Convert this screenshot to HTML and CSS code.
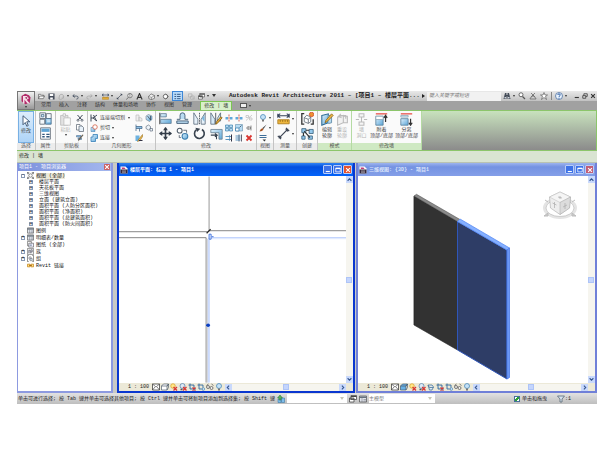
FILE: index.html
```html
<!DOCTYPE html>
<html lang="zh-CN">
<head>
<meta charset="utf-8">
<title>Autodesk Revit Architecture 2011</title>
<link rel="stylesheet" href="styles.css">
</head>
<body>
<svg class="defs" aria-hidden="true">
  <defs>
    <linearGradient id="blueFill" x1="0" y1="0" x2="1" y2="1"><stop offset="0" stop-color="#e2f2fc"/><stop offset="1" stop-color="#5ba6d8"/></linearGradient>
  </defs>
  <symbol id="revit" viewBox="0 0 16 16"><path d="M2 4l5-3 5 2 2 3-1 7-6 2-5-4z" fill="#b22a68"/><path d="M4 4h5l3 3-3 2 4 5h-3L6 9v5H4z" fill="#f7dce8"/><path d="M7 5.500h2l1 1-2 1.500z" fill="#8a1547"/></symbol>
  <symbol id="doc" viewBox="0 0 16 16"><path d="M1 1h10l4 4v10H1z" fill="#fff"/><path d="M1 7h14v8H1z" fill="#33263a"/><path d="M3 3h6l2 3H4z" fill="#c23b77"/><path d="M4 10h8M4 12.500h8" stroke="#fff"/></symbol>
  <symbol id="open" viewBox="0 0 16 16"><path d="M1 13V3h5l2 2h5v3M1 13l3-6h11l-3 6z" fill="#f4f4f4" stroke="#555" stroke-width="1.500"/></symbol>
  <symbol id="save" viewBox="0 0 16 16"><path d="M1 1h14v14H3l-2-2z" fill="#444b59"/><path d="M4 2h8v5H4zM5 10h6v5H5z" fill="#fff"/></symbol>
  <symbol id="sync" viewBox="0 0 16 16"><path d="M3 9a5 5 0 1 1 9 2M8 15a4 4 0 0 1-5-6M12 7v5H8" fill="none" stroke="#aaa" stroke-width="2"/></symbol>
  <symbol id="undo" viewBox="0 0 16 16"><path d="M5 3L2 7l5 3M2 7h8a4 3.500 0 0 1 0 7" fill="none" stroke="#4c5666" stroke-width="2"/></symbol>
  <symbol id="redo" viewBox="0 0 16 16"><path d="M11 3l3 4-5 3M14 7H6a4 3.500 0 0 0 0 7" fill="none" stroke="#aaa" stroke-width="2"/></symbol>
  <symbol id="ruler" viewBox="0 0 16 16"><path d="M1 2v5M15 2v5M1 4.500h14M4 2L1 4.500 4 7M12 2l3 2.500L12 7" fill="none" stroke="#34425a" stroke-width="1.300"/><path d="M1 9.500h14v5H1z" fill="#eeb73f" stroke="#a97615"/><path d="M4 10v2M7 10v2M10 10v2M13 10v2" stroke="#87600f"/></symbol>
  <symbol id="dim" viewBox="0 0 16 16"><path d="M3 13L13 3M1 11l4 4M11 1l4 4" fill="none" stroke="#3c4554" stroke-width="1.500"/><path d="M2 14l1-4 3 3zM14 2l-4 1 3 3z" fill="#3c4554"/></symbol>
  <symbol id="tag" viewBox="0 0 16 16"><circle cx="9" cy="6" r="5" fill="#fff" stroke="#444" stroke-width="1.500"/><path d="M8 4l1-1v6M5 10l-4 5" fill="none" stroke="#444" stroke-width="1.500"/></symbol>
  <symbol id="text" viewBox="0 0 16 16"><path d="M2 15L8 1l6 14M4.500 10h7" fill="none" stroke="#333" stroke-width="2.400"/></symbol>
  <symbol id="house" viewBox="0 0 16 16"><path d="M1 8l6-6 8 4v6l-7 3-6-2z" fill="#eee" stroke="#444" stroke-width="1.300"/><path d="M1 8l7 2 7-4M8 10v5" fill="none" stroke="#444"/></symbol>
  <symbol id="section" viewBox="0 0 16 16"><path d="M8 1l7 7-7 7V1z" fill="#333"/><circle cx="8" cy="8" r="5" fill="#fff" stroke="#333" stroke-width="1.500"/></symbol>
  <symbol id="thin" viewBox="0 0 16 16"><path d="M1 3h4M7 3h8M1 8h4M7 8h8M1 13h4M7 13h8" stroke="#294b77" stroke-width="2"/></symbol>
  <symbol id="windows" viewBox="0 0 16 16"><path d="M4 1h11v8H4zM1 6h9v8H1z" fill="#fff" stroke="#444" stroke-width="1.500"/><path d="M4 3h11M1 8h9" stroke="#444" stroke-width="2"/></symbol>
  <symbol id="hidden" viewBox="0 0 16 16"><path d="M1 2h8v7H1zM6 7h8v7H6z" fill="#ddd" stroke="#aaa" stroke-width="1.500"/><path d="M9 9l5 5m0-5l-5 5" stroke="#aaa"/></symbol>
  <symbol id="bino" viewBox="0 0 16 16"><path d="M4 2h3v4h2V2h3l3 12H9V9H7v5H1z" fill="#444c58"/><path d="M3 10h3v3H3zM10 10h3v3h-3z" fill="#cfd6df"/></symbol>
  <symbol id="key" viewBox="0 0 16 16"><circle cx="6" cy="5.500" r="4" fill="#fff" stroke="#555" stroke-width="1.700"/><path d="M9 9l5 5" stroke="#555" stroke-width="2.500"/></symbol>
  <symbol id="comm" viewBox="0 0 16 16"><path d="M2 14c0-5 6-3 6-8M14 14c0-5-6-3-6-8M4 2l8 8M12 2l-8 8M2 14h12" fill="none" stroke="#666" stroke-width="1.500"/></symbol>
  <symbol id="star" viewBox="0 0 16 16"><path d="M8 1l2 5h5l-4 3 2 6-5-4-5 4 2-6-4-3h5z" fill="#fff" stroke="#555" stroke-width="1.300"/></symbol>
  <symbol id="help" viewBox="0 0 16 16"><circle cx="8" cy="8" r="7" fill="#e9f3fd" stroke="#456a9c" stroke-width="1.500"/><path d="M5.500 6c0-3 5-3 5 0 0 2-2.500 1.500-2.500 4M8 11.500v2" fill="none" stroke="#2b5ca5" stroke-width="2"/></symbol>
  <symbol id="min" viewBox="0 0 16 16"><path d="M2 12h11" stroke="currentColor" stroke-width="3"/></symbol>
  <symbol id="max" viewBox="0 0 16 16"><path d="M2 3h12v10H2z" fill="none" stroke="currentColor" stroke-width="2"/><path d="M2 4h12" stroke="currentColor" stroke-width="3"/></symbol>
  <symbol id="restore" viewBox="0 0 16 16"><path d="M5 7V2h9v7h-4M2 7h8v7H2z" fill="none" stroke="currentColor" stroke-width="2"/></symbol>
  <symbol id="close" viewBox="0 0 16 16"><path d="M3 3l10 10M13 3L3 13" stroke="currentColor" stroke-width="3"/></symbol>
  <symbol id="cursor" viewBox="0 0 16 16"><path d="M4 1v12l3-3 2 5 2-1-2-5h4z" fill="#fff" stroke="#38516f" stroke-width="1.200"/></symbol>
  <symbol id="typeprops" viewBox="0 0 16 16"><path d="M1 1h7v7H1zM9 2h6v6H9zM1 9h6v6H1z" fill="#f4f8fb" stroke="#5d6874"/><path d="M3 3h3v3H3zM8 8h7v7H8z" fill="url(#blueFill)" stroke="#50708c"/><path d="M10 10h4M10 12h4" stroke="#fff"/></symbol>
  <symbol id="props" viewBox="0 0 16 16"><path d="M2 1h12v14H2z" fill="#fff" stroke="#5d6874"/><path d="M3 2h10v4H3z" fill="#5fa5d5"/><path d="M4 9h3M9 9h4M4 12h3M9 12h4" stroke="#34587c" stroke-width="1.600"/></symbol>
  <symbol id="paste" viewBox="0 0 16 16"><path d="M2 3h9v12H2z" fill="#e3e3e3" stroke="#bbb"/><path d="M5 1h3v3H5zM6 6h8v9H6z" fill="#f9f9f9" stroke="#bbb"/></symbol>
  <symbol id="cut" viewBox="0 0 16 16"><path d="M3 2l8 9M13 2L5 11" stroke="#3f4a58" stroke-width="2"/><circle cx="4" cy="12.500" r="2" fill="none" stroke="#3f4a58" stroke-width="1.500"/><circle cx="12" cy="12.500" r="2" fill="none" stroke="#3f4a58" stroke-width="1.500"/></symbol>
  <symbol id="copy" viewBox="0 0 16 16"><path d="M1 1h7l2 2v9H1z" fill="#fff" stroke="#56616e" stroke-width="1.400"/><path d="M6 4h6l3 3v8H6z" fill="#e8f2fa" stroke="#56616e" stroke-width="1.400"/></symbol>
  <symbol id="match" viewBox="0 0 16 16"><path d="M1 3h9v3H1zM4 8h7v3H4z" fill="#8fc0e5" stroke="#3c5f82"/><path d="M15 2L8 11l-4 4 1-5 8-9z" fill="#6a6255"/></symbol>
  <symbol id="cope" viewBox="0 0 16 16"><path d="M2 1v14M2 8h4M14 2L6 8l8 6M7 2l6 12" fill="none" stroke="#3f4a58" stroke-width="2"/></symbol>
  <symbol id="cutgeo" viewBox="0 0 16 16"><path d="M2 7h8v8H2z" fill="url(#blueFill)" stroke="#3d79ac"/><circle cx="10" cy="6" r="4.500" fill="#fff" stroke="#d0573e" stroke-width="1.500"/></symbol>
  <symbol id="join" viewBox="0 0 16 16"><path d="M6 1h9v8h-4v6H2V6h4z" fill="url(#blueFill)" stroke="#2e79b4" stroke-width="1.500"/></symbol>
  <symbol id="ghost" viewBox="0 0 16 16"><path d="M2 2h6v12H2zM8 6l6 3v5H8z" fill="#eee" stroke="#bbb" stroke-width="1.400"/></symbol>
  <symbol id="split" viewBox="0 0 16 16"><path d="M2 4l5-3 7 3v7l-5 4-7-4z" fill="url(#blueFill)" stroke="#5b6b7a"/><path d="M5 4l6 8M11 4v8" stroke="#3a4450" stroke-width="1.500"/></symbol>
  <symbol id="beam" viewBox="0 0 16 16"><path d="M2 1v13M2 5h12v4H2M9 9v6" fill="#8fc0e5" stroke="#41678a" stroke-width="1.500"/></symbol>
  <symbol id="demolish" viewBox="0 0 16 16"><path d="M2 5l5-3 4 3v4l-4 3-5-3zM10 9h5v5h-5z" fill="#eef4f9" stroke="#5a6878" stroke-width="1.300"/></symbol>
  <symbol id="paint" viewBox="0 0 16 16"><path d="M1 3h8v11H1z" fill="#6db3e2"/><path d="M15 1L7 11l-2 4 5-2 6-9z" fill="#e8b64e" stroke="#86611a"/><path d="M8 13h7" stroke="#334" stroke-width="2"/></symbol>
  <symbol id="align" viewBox="0 0 16 16"><path d="M1 1v14" stroke="#444" stroke-width="1.300"/><path d="M2 2h7v4H2zM2 9h13v5H2z" fill="url(#blueFill)" stroke="#627d93"/></symbol>
  <symbol id="offset" viewBox="0 0 16 16"><path d="M1 9h4V4a3 3 0 0 1 6 0v5h4M1 14h14v-3H1z" fill="#b9dbf2" stroke="#4b657d" stroke-width="1.200"/></symbol>
  <symbol id="mirror" viewBox="0 0 16 16"><path d="M1 1v14h5V9zM15 1v14h-5V9z" fill="#e7f1f9" stroke="#5b6d7e"/><path d="M8 1v14" stroke="#3a4450" stroke-dasharray="2 1"/><path d="M11 8l3-4v8z" fill="#79b6e0"/></symbol>
  <symbol id="mirror2" viewBox="0 0 16 16"><path d="M1 1v14h5V9zM13 1v10h-4V8z" fill="#d6eaf8" stroke="#5b6d7e"/><path d="M7 1v14" stroke="#3a4450"/><path d="M15 7l-6 7-2 1 1-3 5-6z" fill="#edae38" stroke="#80601a"/></symbol>
  <symbol id="move" viewBox="0 0 16 16"><path d="M8 1v14M1 8h14" stroke="#333d49" stroke-width="2"/><path d="M8 0l3 4H5zM8 16l3-4H5zM0 8l4-3v6zM16 8l-4-3v6z" fill="#333d49"/></symbol>
  <symbol id="copy2" viewBox="0 0 16 16"><circle cx="4.500" cy="4.500" r="3" fill="#fff" stroke="#4c5866" stroke-width="1.300"/><path d="M9 4h4v3M4 10v3h2" fill="none" stroke="#4c5866"/><circle cx="11" cy="11.500" r="3.500" fill="url(#blueFill)" stroke="#3e7fae" stroke-width="1.300"/></symbol>
  <symbol id="rotate" viewBox="0 0 16 16"><path d="M4 3.500a6 6 0 1 0 7-.5" fill="none" stroke="#3a4450" stroke-width="2"/><path d="M3 1l6 1-4 4z" fill="#3a4450"/></symbol>
  <symbol id="trim" viewBox="0 0 16 16"><path d="M1 3h14v12h-4V7H1z" fill="url(#blueFill)" stroke="#6a8193"/><path d="M1 10h7v5M6 8l3 2-3 2" fill="none" stroke="#3a4450" stroke-width="1.300"/></symbol>
  <symbol id="splitel" viewBox="0 0 16 16"><path d="M1 6h5v5H1zM10 6h5v5h-5z" fill="#5ea8da"/><path d="M8 1v4M8 11v4M6 8h4" stroke="#cc503f" stroke-width="1.700"/></symbol>
  <symbol id="array" viewBox="0 0 16 16"><path d="M1 2h6v5H1zM9 2h6v5H9zM1 9h6v5H1zM9 9h6v5H9z" fill="#b7dcf4" stroke="#367bac" stroke-width="1.300"/></symbol>
  <symbol id="scale" viewBox="0 0 16 16"><path d="M1 1h14v13H1z" fill="#b7dcf4" stroke="#517e9f"/><path d="M1 8h7v6H1z" fill="#fff" stroke="#367bac" stroke-width="1.500"/><path d="M9 7l4-4" stroke="#345" stroke-width="1.500"/></symbol>
  <symbol id="extend" viewBox="0 0 16 16"><path d="M13 1v14" stroke="#334" stroke-width="2"/><path d="M1 5h10M1 11h10M8 3l3 2-3 2M8 9l3 2-3 2" fill="none" stroke="#3e82b5" stroke-width="1.700"/></symbol>
  <symbol id="extends" viewBox="0 0 16 16"><path d="M13 1v14M8 1v14" stroke="#334" stroke-width="1.500"/><path d="M1 4h10M1 8h10M1 12h10" stroke="#3e82b5" stroke-width="1.700"/></symbol>
  <symbol id="unpin" viewBox="0 0 16 16"><path d="M2 3h5v4H2zM9 8h5v4H9zM7 5l4 3M2 13L14 2" fill="none" stroke="#bbb" stroke-width="1.400"/></symbol>
  <symbol id="pin" viewBox="0 0 16 16"><path d="M2 8h4M6 4v8M6 6h5v4H6M12 3v10" fill="none" stroke="#777" stroke-width="1.600"/></symbol>
  <symbol id="delete" viewBox="0 0 16 16"><path d="M3 3l10 10M13 3L3 13" stroke="#d93631" stroke-width="3.600"/></symbol>
  <symbol id="bulb" viewBox="0 0 16 16"><circle cx="8" cy="6" r="5" fill="#c5e2f7" stroke="#4685b7" stroke-width="1.500"/><path d="M6 11h4v4H6z" fill="#777"/></symbol>
  <symbol id="brush" viewBox="0 0 16 16"><path d="M15 1L7 8l2 2z" fill="#444"/><path d="M7 8l2 3-3 3-5 1 2-4z" fill="#a75322"/></symbol>
  <symbol id="linework" viewBox="0 0 16 16"><path d="M1 3h14M1 7h14" stroke="#3e6e99" stroke-width="2.200"/><path d="M7 11h7l-3 4z" fill="#333"/></symbol>
  <symbol id="create" viewBox="0 0 16 16"><path d="M4 2H1v13h3M12 15h3V9" fill="none" stroke="#333" stroke-width="1.600"/><path d="M4 7l3-3 5 2v6l-3 2-5-2z" fill="#fff" stroke="#5d6974"/><path d="M4 7l5 2 3-3M9 9v5" fill="none" stroke="#5d6974"/><circle cx="13" cy="3" r="2.700" fill="#ee9231" stroke="#d34e2b"/></symbol>
  <symbol id="group" viewBox="0 0 16 16"><path d="M1 2h5v5H1zM10 3h5v5h-5zM9 11h5v4H9zM1 11h4v4H1z" fill="#94c9ed" stroke="#39617e"/><path d="M4 5l7 8M6 4h4M3 7v4" stroke="#333" stroke-width="1.400"/></symbol>
  <symbol id="editp" viewBox="0 0 16 16"><path d="M1 3l8-2v11l-8 3z" fill="url(#blueFill)" stroke="#2b6993" stroke-width="1.300"/><path d="M9 3h4v9l-4 1" fill="#b8dbf0" stroke="#5784a1"/><path d="M15 3l-8 8-2 1 1-3 7-8z" fill="#edb647" stroke="#8c671c"/></symbol>
  <symbol id="resetp" viewBox="0 0 16 16"><path d="M2 5l7-2v9l-7 3zM9 4h5v8H9M6 1L3 4l4 2M4 3h8v4" fill="#f2f2f2" stroke="#bbb" stroke-width="1.300"/></symbol>
  <symbol id="opening" viewBox="0 0 16 16"><path d="M5 1h6v4H5zM5 11h6v4H5zM1 8h4M11 8h4M8 5v6" fill="#f5f5f5" stroke="#bbb" stroke-width="1.300"/></symbol>
  <symbol id="attach" viewBox="0 0 16 16"><path d="M1 1h14" stroke="#ec756c" stroke-width="2"/><path d="M1 4h9v11H1z" fill="url(#blueFill)" stroke="#567f9b"/><path d="M1 4h9v4H1z" fill="#fff" stroke="#8fa8b9"/><path d="M13 11V4M11 6l2-3 2 3" fill="none" stroke="#333" stroke-width="1.500"/></symbol>
  <symbol id="detach" viewBox="0 0 16 16"><path d="M1 1h14" stroke="#ec756c" stroke-width="2"/><path d="M1 7h9v8H1z" fill="url(#blueFill)" stroke="#567f9b"/><path d="M1 3h9v2H1z" fill="#d3e9f7" stroke="#8fa8b9"/><path d="M13 7v7M11 12l2 3 2-3" fill="none" stroke="#333" stroke-width="1.500"/></symbol>
  <symbol id="views" viewBox="0 0 16 16"><path d="M1 5V1h4M11 1h4v4M15 11v4h-4M5 15H1v-4M1 1l4 4M15 1l-4 4M1 15l4-4M15 15l-4-4" fill="none" stroke="#444" stroke-width="1.300"/><circle cx="8" cy="8" r="4" fill="#fff" stroke="#444" stroke-width="1.300"/></symbol>
  <symbol id="legend" viewBox="0 0 16 16"><path d="M1 2h14v12H1z" fill="#dfe4ea" stroke="#555" stroke-width="1.500"/><path d="M1 3h14v3H1z" fill="#66717c"/><path d="M6 6v8M9 9h5M9 12h5" stroke="#667"/></symbol>
  <symbol id="sheets" viewBox="0 0 16 16"><path d="M1 1h9v10H1z" fill="#fff" stroke="#555" stroke-width="1.400"/><path d="M4 5h11v9H4z" fill="#eef" stroke="#555" stroke-width="1.400"/><path d="M6 8h5v3H6z" fill="#89a"/></symbol>
  <symbol id="family" viewBox="0 0 16 16"><path d="M1 1h14v14H1z" fill="#f4f4f4" stroke="#555" stroke-width="1.300"/><path d="M4 12V5h3v7M9 12V4h3v5H9" fill="none" stroke="#445" stroke-width="1.300"/></symbol>
  <symbol id="groups" viewBox="0 0 16 16"><path d="M4 1H1v14h3M12 1h3v14h-3" fill="none" stroke="#444" stroke-width="1.400"/><circle cx="7" cy="7" r="3" fill="#dde" stroke="#555"/><path d="M7 8h5v5H7z" fill="#cde" stroke="#555"/></symbol>
  <symbol id="link" viewBox="0 0 16 16"><path d="M1 5h6v6H1zM9 5h6v6H9z" fill="#ffe386" stroke="#c7861b" stroke-width="1.800"/><path d="M5 8h6" stroke="#a3640b" stroke-width="2"/></symbol>
  <symbol id="detail" viewBox="0 0 16 16"><path d="M1 2h14v12H1z" fill="#fff" stroke="#444" stroke-width="1.600"/><path d="M1 2l7 6 7-6M1 14l5-6M15 14l-5-6" fill="none" stroke="#444" stroke-width="1.300"/></symbol>
  <symbol id="style" viewBox="0 0 16 16"><path d="M1 6l4-4h10l-3 4v8H1z" fill="currentColor" stroke="#456" stroke-width="1.300"/><path d="M1 6h11l3-4v7l-3 5" fill="none" stroke="#456" stroke-width="1.300"/></symbol>
  <symbol id="sun" viewBox="0 0 16 16"><circle cx="6" cy="6" r="4.500" fill="#ffe98b" stroke="#dda02b" stroke-width="1.500"/><path d="M7 8l7 7M14 8l-7 7" stroke="#d93631" stroke-width="2.500"/></symbol>
  <symbol id="shadow" viewBox="0 0 16 16"><circle cx="7" cy="6" r="5" fill="#dceaf6" stroke="#5982ad" stroke-width="1.500"/><path d="M3 13h4" stroke="#555" stroke-width="3"/><path d="M8 8l7 7M15 8l-7 7" stroke="#d93631" stroke-width="2.500"/></symbol>
  <symbol id="render" viewBox="0 0 16 16"><path d="M2 4h8l3 4-3 6H5zM2 4l3 5h8" fill="#dceaf6" stroke="#47739b" stroke-width="1.600"/></symbol>
  <symbol id="crop" viewBox="0 0 16 16"><path d="M4 1v11h12M1 4h11v11" fill="#a7cbe8" stroke="#3f6e98" stroke-width="1.800"/><path d="M9 9l6 6M15 9l-6 6" stroke="#d93631" stroke-width="2.500"/></symbol>
  <symbol id="cropshow" viewBox="0 0 16 16"><path d="M4 1v11h12M1 4h11v11" fill="#bcdaf0" stroke="#3f6e98" stroke-width="1.800"/><circle cx="13" cy="12" r="2.500" fill="#cde7f8" stroke="#4782b1"/></symbol>
  <symbol id="glasses" viewBox="0 0 16 16"><path d="M1 5l4-3M15 5l-4-3" stroke="#555" stroke-width="1.500"/><circle cx="4" cy="8" r="3" fill="#eee" stroke="#555" stroke-width="1.500"/><circle cx="11" cy="10" r="3" fill="#eee" stroke="#555" stroke-width="1.500"/></symbol>
  <symbol id="workset" viewBox="0 0 16 16"><path d="M2 8h6v7H2zM9 6h6v9H9z" fill="#7fbdea" stroke="#2f6e9c"/><path d="M6 0l5 6H8v4H4V6H1z" fill="#58b35b" stroke="#2f703a"/></symbol>
  <symbol id="filter" viewBox="0 0 16 16"><path d="M1 2h14l-5 6v6H6V8z" fill="#d7e4f0" stroke="#50606f" stroke-width="1.500"/></symbol>
  <symbol id="up" viewBox="0 0 8 8"><path d="M1 6l3-3 3 3" fill="none" stroke="#34568f" stroke-width="1.700"/></symbol>
  <symbol id="down" viewBox="0 0 8 8"><path d="M1 2l3 3 3-3" fill="none" stroke="#34568f" stroke-width="1.700"/></symbol>
  <symbol id="left" viewBox="0 0 8 8"><path d="M5 1L2 4l3 3" fill="none" stroke="#34568f" stroke-width="1.700"/></symbol>
  <symbol id="right" viewBox="0 0 8 8"><path d="M3 1l3 3-3 3" fill="none" stroke="#34568f" stroke-width="1.700"/></symbol>
</svg>

<div class="app">
  <header class="top">
    <button class="appbtn" aria-label="应用程序菜单"><svg class="i12"><use href="#revit"/></svg><i class="arr"></i></button>
    <div class="topmain">
      <div class="titlebar">
        <div class="qat">
          <button aria-label="打开"><svg><use href="#open"/></svg></button>
          <button aria-label="保存"><svg><use href="#save"/></svg></button>
          <button aria-label="同步"><svg><use href="#sync"/></svg><i class="arr"></i></button>
          <button aria-label="放弃"><svg><use href="#undo"/></svg><i class="arr"></i></button>
          <button aria-label="重做"><svg><use href="#redo"/></svg><i class="arr"></i></button>
          <button class="lead" aria-label="测量"><svg><use href="#ruler"/></svg><i class="arr"></i></button>
          <button aria-label="尺寸标注"><svg><use href="#dim"/></svg></button>
          <button aria-label="标记"><svg><use href="#tag"/></svg></button>
          <button aria-label="文字"><svg><use href="#text"/></svg></button>
          <button class="lead" aria-label="三维视图"><svg><use href="#house"/></svg><i class="arr"></i></button>
          <button aria-label="剖面"><svg><use href="#section"/></svg></button>
          <button class="on" aria-label="细线"><svg><use href="#thin"/></svg></button>
          <button class="lead" aria-label="关闭隐藏窗口"><svg><use href="#hidden"/></svg></button>
          <button aria-label="切换窗口"><svg><use href="#windows"/></svg><i class="arr"></i></button>
          <button aria-label="自定义"><i class="arr big"></i></button>
        </div>
        <h1>Autodesk Revit Architecture 2011 – [项目1 – 楼层平面...</h1>
        <i class="play"></i>
        <input class="search" type="text" placeholder="键入关键字或短语" aria-label="搜索">
        <div class="info">
          <button aria-label="搜索"><svg><use href="#bino"/></svg><i class="arr"></i></button>
          <button aria-label="速博中心"><svg><use href="#key"/></svg></button>
          <button aria-label="通讯中心"><svg><use href="#comm"/></svg></button>
          <button aria-label="收藏夹"><svg><use href="#star"/></svg></button>
          <i class="bar"></i>
          <button aria-label="帮助"><svg><use href="#help"/></svg><i class="arr"></i></button>
        </div>
        <div class="sys">
          <button aria-label="最小化"><svg><use href="#min"/></svg></button>
          <button aria-label="还原"><svg><use href="#restore"/></svg></button>
          <button aria-label="关闭"><svg><use href="#close"/></svg></button>
        </div>
      </div>
      <nav class="tabs">
        <a href="#">常用</a><a href="#">插入</a><a href="#">注释</a><a href="#">结构</a><a href="#">体量和场地</a><a href="#">协作</a><a href="#">视图</a><a href="#">管理</a><a href="#" class="active">修改 | 墙</a>
        <button class="ribbontoggle" aria-label="功能区显示"><span></span><i class="arr"></i></button>
      </nav>
    </div>
  </header>

  <section class="ribbon">
    <div class="panel p-select"><div class="tools"><button class="big on"><svg class="i12"><use href="#cursor"/></svg><span>修改</span></button></div><h2>选择</h2></div>
    <div class="panel p-props"><div class="tools"><div class="stack2"><button aria-label="类型属性"><svg class="i14"><use href="#typeprops"/></svg></button><button aria-label="属性"><svg class="i14"><use href="#props"/></svg></button></div></div><h2>属性</h2></div>
    <div class="panel p-clip"><div class="tools"><button class="big off"><svg class="i14"><use href="#paste"/></svg><span>粘贴</span><i class="arr"></i></button>
      <div class="stack3"><button aria-label="剪切"><svg><use href="#cut"/></svg></button><button aria-label="复制"><svg><use href="#copy"/></svg></button><button aria-label="匹配类型"><svg><use href="#match"/></svg></button></div></div><h2>剪贴板</h2></div>
    <div class="panel p-geo"><div class="tools">
      <div class="stack3 grow"><button><svg><use href="#cope"/></svg>连接端切割<i class="arr"></i></button><button><svg><use href="#cutgeo"/></svg>剪切 <i class="arr"></i></button><button><svg><use href="#join"/></svg>连接 <i class="arr"></i></button></div>
      <div class="stack3"><button aria-label="墙连接"><svg><use href="#ghost"/></svg></button><button aria-label="梁连接"><svg><use href="#beam"/></svg></button><button aria-label="填色"><svg><use href="#paint"/></svg></button></div>
      <div class="stack3"><button aria-label="拆分面"><svg><use href="#split"/></svg></button><button aria-label="拆除"><svg><use href="#demolish"/></svg></button></div>
    </div><h2>几何图形</h2></div>
    <div class="panel p-modify"><div class="tools">
      <div class="grid4">
        <button aria-label="对齐"><svg class="i14"><use href="#align"/></svg></button><button aria-label="偏移"><svg class="i14"><use href="#offset"/></svg></button><button aria-label="镜像拾取轴"><svg class="i14"><use href="#mirror"/></svg></button><button aria-label="镜像绘制轴"><svg class="i14"><use href="#mirror2"/></svg></button>
        <button aria-label="移动"><svg class="i14"><use href="#move"/></svg></button><button aria-label="复制图元"><svg class="i14"><use href="#copy2"/></svg></button><button aria-label="旋转"><svg class="i14"><use href="#rotate"/></svg></button><button aria-label="修剪"><svg class="i14"><use href="#trim"/></svg></button>
      </div>
      <div class="grid3">
        <button aria-label="拆分"><svg><use href="#splitel"/></svg></button><button aria-label="间隙拆分"><svg><use href="#splitel"/></svg></button><button aria-label="解锁"><svg><use href="#unpin"/></svg></button>
        <button aria-label="阵列"><svg><use href="#array"/></svg></button><button aria-label="缩放"><svg><use href="#scale"/></svg></button><button aria-label="锁定"><svg><use href="#pin"/></svg></button>
        <button aria-label="延伸单个"><svg><use href="#extend"/></svg></button><button aria-label="延伸多个"><svg><use href="#extends"/></svg></button><button aria-label="删除"><svg><use href="#delete"/></svg></button>
      </div>
    </div><h2>修改</h2></div>
    <div class="panel p-view"><div class="tools"><div class="stack3"><button aria-label="隐藏"><svg><use href="#bulb"/></svg><i class="arr"></i></button><button aria-label="替换"><svg><use href="#brush"/></svg><i class="arr"></i></button><button aria-label="线处理"><svg><use href="#linework"/></svg></button></div></div><h2>视图</h2></div>
    <div class="panel p-measure"><div class="tools"><div class="stack2"><button aria-label="测量两点"><svg class="i14"><use href="#ruler"/></svg><i class="arr"></i></button><button aria-label="对齐标注"><svg class="i14"><use href="#dim"/></svg><i class="arr"></i></button></div></div><h2>测量</h2></div>
    <div class="panel p-create"><div class="tools"><div class="stack2"><button aria-label="创建部件"><svg class="i14"><use href="#create"/></svg></button><button aria-label="创建组"><svg class="i14"><use href="#group"/></svg></button></div></div><h2>创建</h2></div>
    <div class="panel ctx p-mode"><div class="tools"><button class="big"><svg class="i14"><use href="#editp"/></svg><span>编辑<br>轮廓</span></button><button class="big off"><svg class="i14"><use href="#resetp"/></svg><span>重设<br>轮廓</span></button></div><h2>模式</h2></div>
    <div class="panel ctx p-wall"><div class="tools"><button class="big off"><svg class="i14"><use href="#opening"/></svg><span>墙<br>洞口</span></button><button class="big"><svg class="i14"><use href="#attach"/></svg><span>附着<br>顶部/底部</span></button><button class="big"><svg class="i14"><use href="#detach"/></svg><span>分离<br>顶部/底部</span></button></div><h2>修改墙</h2></div>
  </section>

  <div class="options">修改 | 墙</div>

  <main class="work">
    <aside class="browser">
      <header><h2>项目1 - 项目浏览器</h2><button class="xp red" aria-label="关闭浏览器"><svg><use href="#close"/></svg></button></header>
      <ul class="tree">
        <li><div class="node root"><button aria-label="折叠">-</button><svg><use href="#views"/></svg><span class="sel">视图 (全部)</span></div>
          <ul>
            <li class="node"><button aria-label="展开">+</button><span>楼层平面</span></li>
            <li class="node"><button aria-label="展开">+</button><span>天花板平面</span></li>
            <li class="node"><button aria-label="展开">+</button><span>三维视图</span></li>
            <li class="node"><button aria-label="展开">+</button><span>立面 (建筑立面)</span></li>
            <li class="node"><button aria-label="展开">+</button><span>面积平面 (人防分区面积)</span></li>
            <li class="node"><button aria-label="展开">+</button><span>面积平面 (净面积)</span></li>
            <li class="node"><button aria-label="展开">+</button><span>面积平面 (总建筑面积)</span></li>
            <li class="node"><button aria-label="展开">+</button><span>面积平面 (防火间面积)</span></li>
          </ul>
        </li>
        <li class="node root leaf"><svg><use href="#legend"/></svg><span>图例</span></li>
        <li class="node root"><button aria-label="展开">+</button><svg><use href="#legend"/></svg><span>明细表/数量</span></li>
        <li class="node root leaf"><svg><use href="#sheets"/></svg><span>图纸 (全部)</span></li>
        <li class="node root"><button aria-label="展开">+</button><svg><use href="#family"/></svg><span>族</span></li>
        <li class="node root"><button aria-label="展开">+</button><svg><use href="#groups"/></svg><span>组</span></li>
        <li class="node root leaf"><svg><use href="#link"/></svg><span>Revit 链接</span></li>
      </ul>
    </aside>

    <section class="win focus">
      <header><svg><use href="#doc"/></svg><h2>楼层平面: 标高 1 - 项目1</h2><button class="xp" aria-label="最小化"><svg><use href="#min"/></svg></button><button class="xp" aria-label="最大化"><svg><use href="#max"/></svg></button><button class="xp red" aria-label="关闭"><svg><use href="#close"/></svg></button></header>
      <div class="view">
        <svg class="canvas" viewBox="0 0 228 207" role="img" aria-label="标高 1 平面">
          <path d="M90.500 0v54" stroke="#b5b5b5" stroke-width="1.400"/>
          <path d="M0 55.500h89M90 54.500h138M0 61.500h87.500V207" fill="none" stroke="#858585"/>
          <path d="M88.500 63h2v144h-2z" fill="#dbe6ff"/>
          <path d="M88.500 62.500V207" stroke="#ccc"/>
          <path d="M90.500 61.500V207M93 61.500h135" fill="none" stroke="#b5cbfb"/>
          <path d="M90.500 62.500h137.500" stroke="#dce7ff"/>
          <path d="M88 57l4-4" stroke="#222" stroke-width="1.200"/>
          <path d="M90.500 58v5h2v-5zM93 60.500h2" fill="#fff" stroke="#4777de"/>
          <path d="M87.500 149.500h4" stroke="#0b3fc0"/><circle cx="89.500" cy="149.500" r="1.800" fill="#0b3fc0"/>
        </svg>
        <div class="vscroll"><button aria-label="向上"><svg><use href="#up"/></svg></button><i></i><button aria-label="向下"><svg><use href="#down"/></svg></button></div>
      </div>
      <footer><span class="ratio">1 : 100</span>
        <div class="vc"><svg><use href="#detail"/></svg><svg class="plain"><use href="#style"/></svg><svg><use href="#sun"/></svg><svg><use href="#shadow"/></svg><svg><use href="#crop"/></svg><svg><use href="#cropshow"/></svg><svg><use href="#glasses"/></svg><svg><use href="#bulb"/></svg></div>
        <div class="hscroll"><button aria-label="向左"><svg><use href="#left"/></svg></button><i></i><button aria-label="向右"><svg><use href="#right"/></svg></button></div>
      </footer>
    </section>

    <section class="win">
      <header><svg><use href="#doc"/></svg><h2>三维视图: {3D} - 项目1</h2><button class="xp" aria-label="最小化"><svg><use href="#min"/></svg></button><button class="xp" aria-label="最大化"><svg><use href="#max"/></svg></button><button class="xp red" aria-label="关闭"><svg><use href="#close"/></svg></button></header>
      <div class="view">
        <svg class="canvas" viewBox="0 0 228 207" role="img" aria-label="墙三维视图">
          <path d="M55 20l43.500 25.500V174L55 149z" fill="#323232" stroke="#222" stroke-width=".6"/>
          <path d="M55 20l2.500-1.700L101 43.500l-2.500 2z" fill="#8b8b8b" stroke="#444" stroke-width=".5"/>
          <path d="M54.500 20v129" stroke="#999" stroke-width=".6"/>
          <path d="M98.500 45.500L148 74v129l-49.500-29z" fill="#2e3d66" stroke="#2f56b8" stroke-width="1"/>
          <path d="M98.500 45.500l2.500-2.500L150.500 72 148 74z" fill="#85b0ff" stroke="#5c8df5" stroke-width=".8"/>
          <path d="M148 74l2.500-2v129.500L148 203z" fill="#6c98f5" stroke="#4b7bea" stroke-width=".8"/>
          <ellipse cx="201" cy="32" rx="15.500" ry="9.500" fill="#fafafa" stroke="#e4e4e4" stroke-width="3"/>
          <ellipse cx="201" cy="32" rx="14" ry="8.500" fill="#fff" stroke="#bcbcbc" stroke-width=".7"/>
          <path d="M185 40l4-3v3zM217 40l-4-3v3zM186 24l3 2M216 24l-3 2" fill="#ccc" stroke="#bbb"/>
          <path d="M201 16l10.500 5-1 11L201 38.500 191.500 32l-1-11z" fill="#ededed" stroke="#aaa" stroke-width=".6"/>
          <path d="M201 16l10.500 5L201 26.500 190.500 21z" fill="#f5f5f5" stroke="#bbb" stroke-width=".5"/>
          <path d="M201 26.500l10.500-5.500-1 11-9.500 6.500z" fill="#dcdcdc" stroke="#aaa" stroke-width=".5"/>
          <path d="M199 21l4 1M201 20v3M193.500 27l4 2M195.500 26v6M204 31l4-2M206 27v6" stroke="#aaa" stroke-width=".7"/>
        </svg>
        <div class="vscroll"><button aria-label="向上"><svg><use href="#up"/></svg></button><i></i><button aria-label="向下"><svg><use href="#down"/></svg></button></div>
      </div>
      <footer><span class="ratio">1 : 100</span>
        <div class="vc"><svg><use href="#detail"/></svg><svg class="shaded"><use href="#style"/></svg><svg><use href="#sun"/></svg><svg><use href="#shadow"/></svg><svg><use href="#render"/></svg><svg><use href="#crop"/></svg><svg><use href="#cropshow"/></svg><svg><use href="#glasses"/></svg><svg><use href="#bulb"/></svg></div>
        <div class="hscroll"><button aria-label="向左"><svg><use href="#left"/></svg></button><i></i><button aria-label="向右"><svg><use href="#right"/></svg></button></div>
      </footer>
    </section>
  </main>

  <footer class="status">
    <p>单击可进行选择; 按 Tab 键并单击可选择其他项目; 按 Ctrl 键并单击可将新项目添加到选择集; 按 Shift 键</p>
    <svg><use href="#workset"/></svg>
    <div class="combo short"><select aria-label="活动工作集" disabled><option></option></select></div>
    <svg><use href="#windows"/></svg>
    <svg><use href="#legend"/></svg>
    <div class="combo"><select aria-label="设计选项" disabled><option>主模型</option></select></div>
    <label><input type="checkbox" checked>单击和拖曳</label>
    <span class="count"><svg><use href="#filter"/></svg>:1</span>
  </footer>
</div>
</body>
</html>
```
FILE: styles.css
```css
* { box-sizing: border-box; }
body {
  margin: 0;
  background: #fff;
  color: #222;
  font: 5px/6px "Liberation Mono", "Noto Sans CJK SC", monospace;
}
h1, h2, p, ul { margin: 0; padding: 0; font: inherit; }
ul { list-style: none; }
a { color: inherit; text-decoration: none; }
button, input, select { margin: 0; padding: 0; border: 0; background: none; color: inherit; font: inherit; }
button { display: flex; align-items: center; gap: 2px; }
svg { display: block; flex: none; width: 8px; height: 8px; }
.defs { position: absolute; width: 0; height: 0; }
.i12 { width: 12px; height: 12px; }
.i14 { width: 13px; height: 13px; }
.arr { flex: none; border: 1px solid transparent; border-top: 2px solid #333; border-bottom: 0; }
.arr.big { border-width: 3px 2px 0; }

.app { margin: 91px 14px 0 17px; }

/* Title bar and tabs */
.top { display: flex; background: #a1a1a1; }
.appbtn {
  flex-direction: column; justify-content: center; gap: 1px; width: 18px;
  border: 1px solid #777; background: linear-gradient(#f2f2f2, #999);
}
.topmain { flex: 1; min-width: 0; }
.titlebar { display: flex; align-items: center; height: 10px; background: linear-gradient(#e9e9e9, #c2c2c2); }
.qat { display: flex; flex: none; align-items: center; gap: 3px; width: 192px; padding-left: 3px; }
.qat svg { width: 7px; height: 7px; }
.qat .on { width: 11px; height: 10px; justify-content: center; border: 1px solid #3d86d6; background: #b7dafa; }
.qat .lead { margin-left: 2px; }
.titlebar h1 { flex: 1 0 auto; padding-left: 2px; font-size: 6px; font-weight: bold; line-height: 10px; white-space: nowrap; }
.play { margin: 0 2px; border: 2px solid transparent; border-left: 3px solid #222; border-right: 0; }
.search { flex: 0 1 74px; min-width: 0; height: 9px; padding: 0 2px; background: #f1f1f1; font-style: italic; }
.search::placeholder { color: #777; opacity: 1; }
.info { display: flex; align-items: center; gap: 3px; padding-left: 2px; }
.bar { width: 1px; height: 8px; background: #888; }
.sys { display: flex; gap: 2px; padding: 0 1px 0 7px; color: #333; }
.sys svg { width: 6px; height: 6px; }
.tabs { display: flex; align-items: center; gap: 8px; height: 9px; padding-left: 6px; color: #333; line-height: 9px; }
.tabs a { white-space: nowrap; }
.tabs .active { padding: 0 3px; border: 1px solid #7cc653; border-bottom: 0; background: #d8efcb; line-height: 8px; }
.ribbontoggle span { width: 7px; height: 5px; border: 1px solid #555; background: #eee; }

/* Ribbon */
.ribbon {
  display: flex; height: 41px; border: 1px solid #8cc56b; border-width: 1px 1px 1px 0;
  background: linear-gradient(#c8e2bd, #8b8b8b);
}
.panel { display: flex; flex-direction: column; flex: none; border-right: 1px solid #c4c4c4; background: #fafafa; }
.panel h2 { height: 7px; background: #ececec; color: #555; line-height: 7px; text-align: center; white-space: nowrap; }
.ctx h2 { background: #cfe9c3; }
.ctx { border-color: #b5dba3; }
.tools { display: flex; flex: 1; justify-content: center; gap: 2px; padding: 1px 2px; color: #444; }
.big { flex-direction: column; justify-content: flex-start; gap: 1px; padding-top: 1px; text-align: center; white-space: nowrap; }
.big.on { flex: 1; padding-top: 3px; border: 1px solid #78b0e4; background: linear-gradient(#dcedfc, #aed4f7); }
.off { color: #b5b5b5; }
.stack2, .stack3 { display: flex; flex-direction: column; gap: 2px; }
.stack3 { padding-top: 2px; }
.grow { flex: 1; }
.stack3 .arr { margin-left: auto; }
.p-geo .grow .arr { margin: 0 3px 0 auto; }
.p-geo .grow button + button .arr { margin: 0 auto 0 0; }
.p-select { width: 19px; }
.p-select .tools { padding: 0 1px; }
.p-props { width: 20px; }
.p-clip { width: 32px; }
.p-clip .tools { gap: 4px; }
.p-geo { width: 68px; }
.p-modify { width: 101px; }
.p-view { width: 17px; }
.p-measure { width: 23px; }
.p-create { width: 21px; }
.p-mode { width: 34px; }
.p-wall { width: 70px; }
.grid4 { display: grid; grid-template-columns: repeat(4, 13px); gap: 2px 4px; align-content: start; }
.grid3 { display: grid; grid-template-columns: repeat(3, 8px); gap: 2px; align-content: start; padding-top: 2px; }

.options { height: 12px; padding-left: 2px; border-bottom: 1px solid #b9c2b2; background: #d9e4d2; line-height: 11px; }

/* Work area */
.work { display: grid; grid-template-columns: 96px minmax(0, 1fr) minmax(0, 1fr); background: #c9cac6; }
.browser { border: 1px solid #8d9ae0; border-width: 0 2px 2px 1px; background: #fff; color: #111; }
.browser header, .win header { display: flex; align-items: center; color: #fff; }
.browser header { height: 8px; padding: 0 1px; background: linear-gradient(90deg, #7d92dd, #a4b7ee); }
.browser h2, .win h2 { flex: 1; white-space: nowrap; overflow: hidden; }
.xp { flex: none; justify-content: center; width: 9px; height: 9px; border: 1px solid #b9cdf8; border-radius: 1px; background: #3d72e8; color: #fff; }
.xp svg { width: 6px; height: 6px; }
.xp.red { background: #e5522d; }
.browser .xp { width: 6px; height: 6px; border: 0; background: #cc5b5b; }
.tree { padding: 1px 0 0 3px; }
.node { display: flex; align-items: center; height: 6px; gap: 2px; white-space: nowrap; }
.tree ul .node { gap: 6px; padding-left: 8px; }
.node.root { height: 7px; }
.node.root.leaf { padding-left: 6px; }
.node button { justify-content: center; width: 4px; height: 4px; border: 1px solid #8a9ab5; background: #fff; line-height: 3px; }
.node svg { width: 7px; height: 7px; }
.sel { background: #ece9d8; }
.win { margin-left: 1px; border: 2px solid #7080d8; border-top: 0; background: #fff; }
.win.focus { margin-left: 4px; border-color: #0a37d0; }
.win header { height: 13px; gap: 2px; padding: 0 1px; background: linear-gradient(#9db4ee, #7492e2 30%, #849fe8); }
.win.focus header { background: linear-gradient(#3285f5, #0350df 30%, #0363fa); }
.win h2 { font-weight: bold; }
.win .xp { margin-left: -1px; }
.win:not(.focus) h2 { color: #dce5fb; }
.win:not(.focus) .red { background: #c25d75; }
.view { display: flex; }
.canvas { flex: 1; min-width: 0; width: auto; height: 207px; }
.vscroll { display: flex; flex-direction: column; justify-content: space-between; width: 7px; background: #f6f5ef; }
.vscroll button, .hscroll button { justify-content: center; width: 7px; height: 7px; background: #c9d9fc; }
.vscroll button svg, .hscroll button svg { width: 5px; height: 5px; }
.vscroll i, .hscroll i { width: 6px; height: 6px; border: 1px solid #aec4f7; background: #c4d5fd; }
.win footer { display: flex; align-items: center; height: 8px; background: #ece9d8; }
.ratio { width: 33px; padding-left: 9px; white-space: nowrap; }
.vc { display: flex; gap: 1px; }
.plain { color: #fff; }
.shaded { color: #67b0e4; }
.hscroll { display: flex; flex: 1; justify-content: space-between; align-items: center; margin: 0 7px 0 2px; background: #f6f5ef; }

/* Status bar */
.status { display: flex; align-items: center; height: 11px; gap: 2px; padding-left: 1px; background: linear-gradient(#e2e2e2, #bebebe); white-space: nowrap; }
.status p { flex: none; }
.combo { display: flex; align-items: center; width: 66px; height: 9px; background: #fff; }
.combo.short { width: 60px; }
.combo select { flex: 1; appearance: none; color: #777; opacity: 1; }
.combo::after { content: ""; margin-right: 3px; border: 2px solid transparent; border-top: 3px solid #c5c5b5; border-bottom: 0; }
.status label { display: flex; align-items: center; gap: 2px; margin-left: auto; }
.status input { appearance: none; width: 6px; height: 6px; border: 1px solid #47709b; background: linear-gradient(135deg, #fff 35%, #2ba233 35%, #2ba233 70%, #fff 70%); }
.count { display: flex; align-items: center; padding: 0 26px 0 8px; }
```
